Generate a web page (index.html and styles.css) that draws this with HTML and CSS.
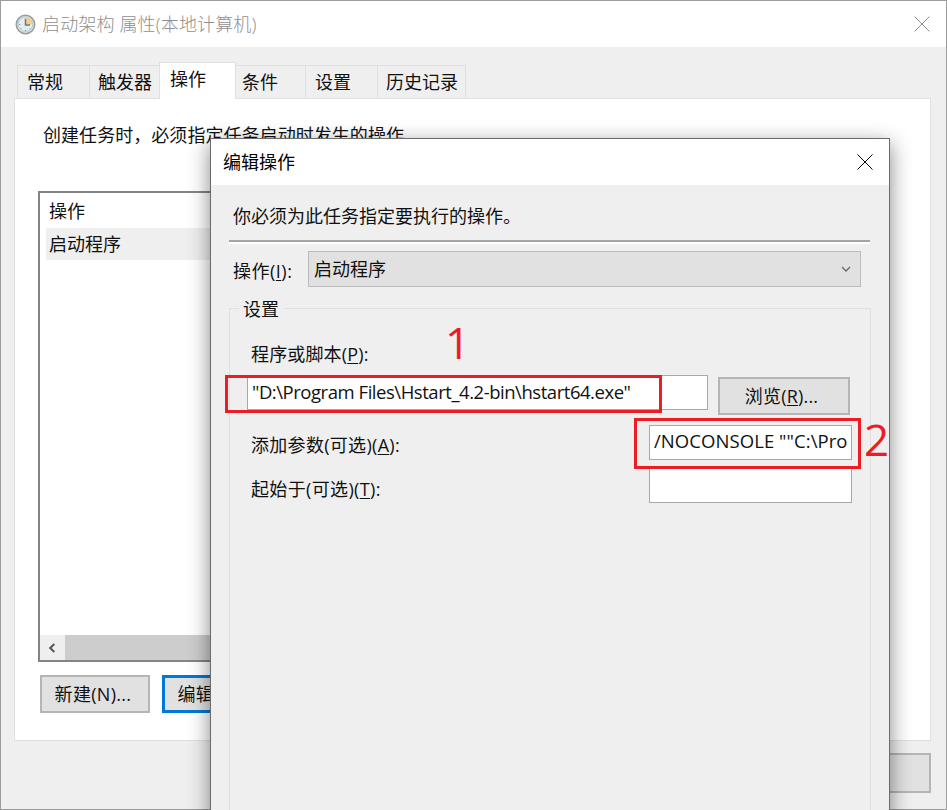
FILE: index.html
```html
<!DOCTYPE html>
<html lang="zh-CN">
<head>
<meta charset="utf-8">
<title>启动架构 属性</title>
<link rel="stylesheet" href="styles.css">
</head>
<body>
<main class="window">
  <header class="window-title">
    <svg class="clock" width="21" height="21" viewBox="0 0 21 21">
      <circle cx="10.5" cy="10.5" r="9.2" fill="#d9e3e8" stroke="#979c9f" stroke-width="1.6"/>
      <circle cx="10.5" cy="10.2" r="7.3" fill="#e4edf1" stroke="#b5bec3" stroke-width=".8"/>
      <path d="M10.5 10.5V3.2A7.2 7.2 0 0 1 17.7 10.5Z" fill="#f1d18c"/>
      <path d="M10.5 4.8V11H15" fill="none" stroke="#6e787e" stroke-width="1.5"/>
      <path d="M4 10.5h1.3M10.5 15.8v1.2M5.8 14.8l.8-.8M14.4 14l.8.8" stroke="#8b989e"/>
    </svg>
    <span class="title-text">启动架构 属性(本地计算机)</span>
    <svg class="close" width="16" height="16" viewBox="0 0 16 16"><path d="M.5.5l15 15M15.5.5l-15 15"/></svg>
  </header>
  <section class="window-body">
    <nav class="tabs">
      <span class="tab tab-general">常规</span>
      <span class="tab tab-trigger">触发器</span>
      <span class="tab tab-active">操作</span>
      <span class="tab tab-condition">条件</span>
      <span class="tab tab-settings">设置</span>
      <span class="tab tab-history">历史记录</span>
    </nav>
    <div class="panel">
      <p class="intro">创建任务时，必须指定任务启动时发生的操作.</p>
      <div class="list">
        <div class="list-head">操作</div>
        <div class="list-row">启动程序</div>
        <div class="scrollbar">
          <span class="scroll-arrow"><svg width="8" height="10" viewBox="0 0 8 10"><path d="M6.3 1L2.2 5l4.1 4"/></svg></span>
          <span class="scroll-thumb"></span>
        </div>
      </div>
      <div class="panel-actions">
        <button class="button new-button">新建(N)...</button>
        <button class="button edit-button">编辑(E)...</button>
      </div>
    </div>
    <footer class="window-footer"><button class="button footer-button"></button></footer>
  </section>
</main>

<section class="dialog">
  <header class="dialog-title">
    <span>编辑操作</span>
    <svg class="close" width="16" height="16" viewBox="0 0 16 16"><path d="M.5.5l15 15M15.5.5l-15 15"/></svg>
  </header>
  <div class="dialog-body">
    <p class="prompt">你必须为此任务指定要执行的操作。</p>
    <div class="separator"></div>
    <div class="action-row">
      <label>操作(<u>I</u>):</label>
      <div class="select"><span>启动程序</span><svg width="10" height="7" viewBox="0 0 10 7"><path d="M1 1l4 4 4-4"/></svg></div>
    </div>
    <div class="group">
      <div class="legend">设置</div>
      <label class="program-label">程序或脚本(<u>P</u>):</label>
      <div class="program-row">
        <div class="input program-input"><span class="program-text">"D:\Program Files\Hstart_4.2-bin\hstart64.exe"</span></div>
        <button class="button browse">浏览(<u>R</u>)...</button>
      </div>
      <div class="field-row args-row">
        <label>添加参数(可选)(<u>A</u>):</label>
        <div class="input short"><span class="args-text">/NOCONSOLE ""C:\Pro</span></div>
      </div>
      <div class="field-row start-row">
        <label>起始于(可选)(<u>T</u>):</label>
        <div class="input short"></div>
      </div>
    </div>
  </div>
</section>
<div class="mark mark-program"></div>
<div class="mark mark-args"></div>
<span class="number number-one">1</span>
<span class="number number-two">2</span>
</body>
</html>
```
FILE: styles.css
```css
* { box-sizing: border-box; }
body {
  margin: 0;
  width: 947px;
  height: 810px;
  overflow: hidden;
  position: relative;
  font: 18px/24px "Open Sans", "Noto Sans CJK SC", sans-serif;
  color: #111;
}
p { margin: 0; }
span, label, p, button { white-space: nowrap; }
u { text-decoration-thickness: 1px; text-underline-offset: 2px; }
.window, .dialog, .button { font-family: "Open Sans", "Noto Sans CJK SC", sans-serif; }
.window {
  display: flex;
  flex-direction: column;
  width: 947px;
  height: 810px;
  border: 1px solid #9c9c9c;
  background: #efefef;
}
.window-title {
  display: flex;
  align-items: center;
  height: 46px;
  padding: 0 16px 0 14px;
  background: #fff;
  color: #8f8f8f;
}
.title-text { margin-left: 6px; font-weight: 300; letter-spacing: .15px; }
.close { margin-left: auto; fill: none; stroke: currentColor; stroke-width: 1; }
.window-body { padding: 15px 15px 0 13px; }
.tabs { display: flex; align-items: flex-end; height: 37px; padding-left: 3px; position: relative; z-index: 1; }
.tab {
  height: 34px;
  padding: 4px 0 0 8px;
  border: 1px solid #e0e0e0;
  border-left-width: 0;
  background: #efefef;
}
.tab-general { width: 73px; padding-left: 9px; border-left-width: 1px; }
.tab-trigger { width: 69px; border-right: 0; }
.tab-active { width: 77px; height: 37px; padding: 4px 0 0 10px; background: #fff; border-bottom: 0; border-left-width: 1px; }
.tab-condition { width: 70px; padding-left: 6px; }
.tab-settings { width: 72px; padding-left: 9px; }
.tab-history { width: 88px; padding-left: 8px; }
.panel {
  height: 643px;
  margin-top: -1px;
  padding: 24px 23px 0;
  border: 1px solid #e0e0e0;
  background: #fff;
}
.intro { padding-left: 5px; letter-spacing: .05px; }
.list {
  display: flex;
  flex-direction: column;
  width: 760px;
  height: 471px;
  margin-top: 44px;
  border: 2px solid #828486;
}
.list-head { height: 35px; padding: 6px 9px; }
.list-row { height: 32px; margin-left: 6px; padding: 4px 3px; background: #efefef; }
.scrollbar { display: flex; height: 25px; margin-top: auto; background: #efefef; }
.scroll-arrow { display: flex; justify-content: center; align-items: center; width: 25px; padding-right: 2px; }
.scroll-arrow path { fill: none; stroke: #555; stroke-width: 2; }
.scroll-thumb { flex: 1; background: #cdcdcd; }
.button {
  padding: 0;
  border: 2px solid #b5b5b5;
  background: #e1e1e1;
  color: #111;
  font-size: 18px;
  line-height: 24px;
}
.panel-actions { display: flex; gap: 12px; margin: 13px 0 0 2px; }
.new-button { width: 110px; height: 38px; padding-right: 4px; letter-spacing: .3px; }
.edit-button { width: 110px; height: 38px; padding-right: 6px; letter-spacing: .3px; border: 3px solid #0078d7; }
.window-footer { display: flex; justify-content: flex-end; padding-top: 12px; }
.footer-button { width: 110px; height: 40px; }
.dialog {
  position: absolute;
  left: 210px;
  top: 138px;
  width: 680px;
  height: 690px;
  border: 1px solid #6b6b6b;
  background: #efefef;
  box-shadow: 0 6px 20px rgba(0, 0, 0, .48);
}
.dialog-title { display: flex; align-items: center; height: 46px; padding: 0 16px 1px 12px; background: #fff; color: #000; }
.dialog-body { padding: 19px 18px 0; }
.prompt { padding-left: 4px; }
.separator { height: 4px; margin-top: 12px; border-top: 2px solid #a5a5a5; border-bottom: 2px solid #fff; width: 641px; }
.action-row { display: flex; height: 36px; margin-top: 7px; padding-left: 4px; }
.action-row label { width: 75px; padding-top: 8px; letter-spacing: .5px; }
.select { display: flex; justify-content: space-between; align-items: center; width: 553px; border: 1px solid #bcbcbc; padding: 0 9px 0 5px; background: #e1e1e1; }
.select svg { fill: none; stroke: #666; stroke-width: 1.3; }
.group { width: 642px; height: 520px; margin-top: 21px; padding-left: 17px; border: 1px solid #e0e0e0; }
.legend { width: 46px; height: 24px; margin: -12px 0 0 -8px; padding: 0 4px; background: #efefef; }
.program-label { display: block; height: 33px; margin: 21px 0 0 4px; letter-spacing: .15px; }
.program-row { display: flex; gap: 10px; }
.input { height: 35px; padding: 5px 4px; border: 1px solid #a8a8a8; background: #fff; overflow: hidden; }
.program-input { width: 461px; }
.program-input, .args-row .short { padding-top: 4px; font-size: 18.5px; }
.program-text { letter-spacing: -.46px; }
.browse { width: 132px; height: 38px; margin-top: 2px; padding-right: 5px; letter-spacing: .2px; }
.field-row { display: flex; justify-content: space-between; padding: 0 18px 0 4px; }
.short { width: 203px; }
.args-row { height: 43px; margin-top: 10px; }
.args-row label { padding-top: 8px; letter-spacing: .3px; }
.args-row .short { padding-top: 3px; }
.args-text { letter-spacing: .07px; }
.start-row label { padding-top: 9px; letter-spacing: .35px; }
.mark { position: absolute; border: 3px solid #ed1c24; }
.mark-program { left: 225px; top: 375px; width: 437px; height: 38px; }
.mark-args { left: 634px; top: 418px; width: 227px; height: 51px; }
.number { position: absolute; color: #ed1c24; font: 44px/48px "Open Sans", sans-serif; }
.number-one { left: 445px; top: 318px; }
.number-two { left: 864px; top: 415px; }
```
